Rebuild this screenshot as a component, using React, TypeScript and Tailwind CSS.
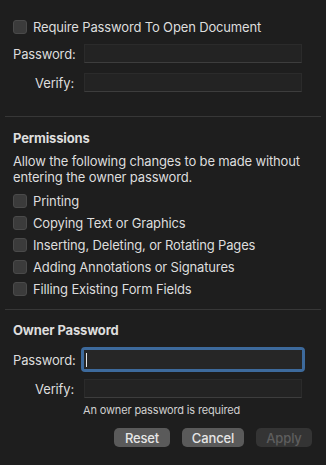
import React from 'react';

const Checkbox: React.FC = () => (
  <span className="block h-[14px] w-[14px] shrink-0 rounded-[3px] border border-[#4a4a4a] bg-[#3b3b3b]" />
);

const Field: React.FC<{ label: string; focused?: boolean }> = ({ label, focused }) => (
  <div className="flex items-center">
    <span className="w-[61px] text-right">{label}</span>
    <div className="ml-[10px] w-[218px]">
      {focused ? (
        <div className="-m-[3px] rounded-[4px] border-[3px] border-[#3d6a9c] p-0">
          <div className="flex h-[19px] items-center bg-[#262626] pl-[2px]">
            <span className="block h-[14px] w-px bg-[#e6e6e6]" />
          </div>
        </div>
      ) : (
        <div className="h-[19px] border border-[#2b2b2b] border-b-[#3d3d3d] bg-[#232323]" />
      )}
    </div>
  </div>
);

const permissions = [
  'Printing',
  'Copying Text or Graphics',
  'Inserting, Deleting, or Rotating Pages',
  'Adding Annotations or Signatures',
  'Filling Existing Form Fields',
];

export default function App() {
  return (
    <div
      className="h-[465px] w-[326px] overflow-hidden bg-[#1e1e1e] text-[13px] leading-[16px] tracking-[-0.15px] text-[#dddddd]"
      style={{ fontFamily: 'Inter, "Noto Sans", sans-serif' }}
    >
      <div className="px-[13px] pt-[19px]">
        <label className="flex h-[16px] items-center gap-[6px]">
          <Checkbox />
          <span>Require Password To Open Document</span>
        </label>
        <div className="mt-[9px] flex flex-col gap-[10px]">
          <Field label="Password:" />
          <Field label="Verify:" />
        </div>
      </div>

      <div className="mx-[5px] mt-[24px] h-px bg-[#373737]" />

      <div className="px-[13px]">
        <h3 className="mt-[13px] font-bold">Permissions</h3>
        <p className="mt-[7px]">
          Allow the following changes to be made without entering the owner password.
        </p>
        <ul className="mt-[5px]">
          {permissions.map((p) => (
            <li key={p} className="flex h-[22px] items-center gap-[6px]">
              <Checkbox />
              <span>{p}</span>
            </li>
          ))}
        </ul>
      </div>

      <div className="mx-[5px] mt-[9px] h-px bg-[#373737]" />

      <div className="px-[13px]">
        <h3 className="mt-[12px] font-bold">Owner Password</h3>
        <div className="mt-[12px] flex flex-col gap-[10px]">
          <Field label="Password:" focused />
          <Field label="Verify:" />
        </div>
        <p className="ml-[70px] mt-[5px] text-[11px] leading-[14px] text-[#d0d0d0]">
          An owner password is required
        </p>
        <div className="mt-[11px] flex justify-end gap-[12px] pr-[1px]">
          <button className="h-[19px] w-[56px] rounded-[5px] bg-[#5a5a5a] font-medium text-[#e6e6e6]">Reset</button>
          <button className="h-[19px] w-[62px] rounded-[5px] bg-[#5a5a5a] font-medium text-[#e6e6e6]">Cancel</button>
          <button className="h-[19px] w-[56px] rounded-[5px] bg-[#343434] font-medium text-[#5e5e5e]">Apply</button>
        </div>
      </div>
    </div>
  );
}
